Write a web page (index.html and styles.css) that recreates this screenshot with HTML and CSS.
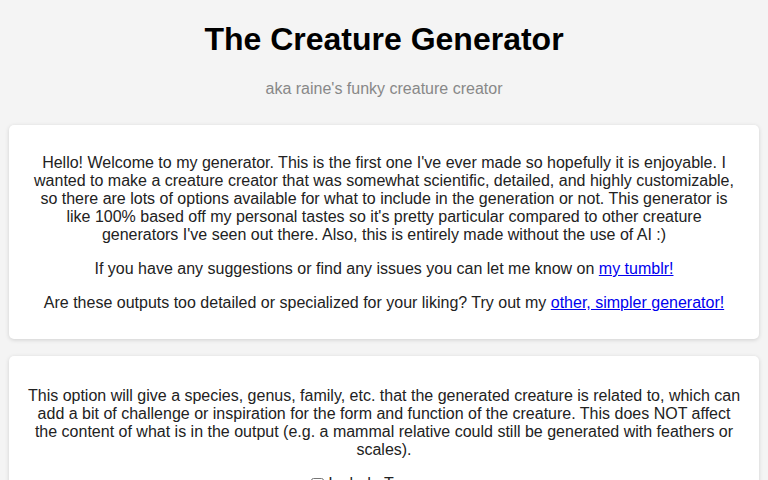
FILE: index.html
```html
<!DOCTYPE html>
<html>
<head>
<meta charset="utf-8">
<link rel="stylesheet" href="styles.css">
</head>
<body>
<header class="header">
  <h1 class="title">The Creature Generator</h1>
  <p class="subtitle">aka raine's funky creature creator</p>
</header>
<main class="cards">
  <section class="card card-intro">
    <p>Hello! Welcome to my generator. This is the first one I've ever made so hopefully it is enjoyable. I wanted to make a creature creator that was somewhat scientific, detailed, and highly customizable, so there are lots of options available for what to include in the generation or not. This generator is like 100% based off my personal tastes so it's pretty particular compared to other creature generators I've seen out there. Also, this is entirely made without the use of AI :)</p>
    <p>If you have any suggestions or find any issues you can let me know on <a href="#">my tumblr!</a></p>
    <p>Are these outputs too detailed or specialized for your liking? Try out my <a href="#">other, simpler generator!</a></p>
  </section>
  <section class="card card-option">
    <p>This option will give a species, genus, family, etc. that the generated creature is related to, which can add a bit of challenge or inspiration for the form and function of the creature. This does NOT affect the content of what is in the output (e.g. a mammal relative could still be generated with feathers or scales).</p>
    <label class="check"><input type="checkbox"> Include Taxonomy</label>
  </section>
</main>
</body>
</html>
```
FILE: styles.css
```css
html, body {
  margin: 0;
  padding: 0;
}
body {
  background: #f4f4f4;
  font-family: "Liberation Sans", Arial, sans-serif;
  font-size: 16px;
  color: #222;
  padding: 0 9px;
}
.header {
  text-align: center;
  padding-top: 21px;
  margin-bottom: 27px;
}
.title {
  font-size: 32px;
  font-weight: bold;
  margin: 0 0 22px;
  color: #000;
  line-height: 37px;
}
.subtitle {
  margin: 0;
  color: #888;
  line-height: 18px;
}
.cards {
  display: flex;
  flex-direction: column;
  gap: 17px;
}
.card {
  background: #fff;
  border-radius: 5px;
  box-shadow: 0 1px 4px rgba(0, 0, 0, 0.15);
  padding: 13px 18px 11px;
  text-align: center;
}
.card p {
  margin: 16px 0;
  line-height: 18px;
}
.card-option {
  padding-top: 15px;
}
.card a {
  color: #0000ee;
}
.check {
  display: inline-flex;
  align-items: center;
  gap: 4px;
}
.check input {
  margin: 0;
  width: 13px;
  height: 13px;
}
```
